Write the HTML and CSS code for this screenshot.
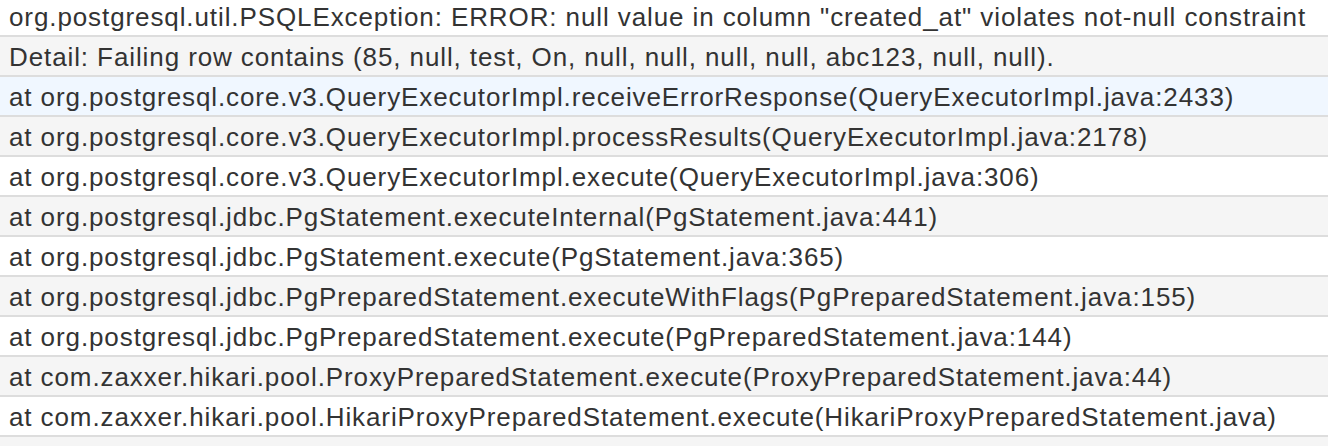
FILE: index.html
```html
<!DOCTYPE html>
<html>
<head>
<meta charset="utf-8">
<link rel="stylesheet" href="styles.css">
</head>
<body>
<div class="viewport">
<ul class="trace">
  <li class="row">org.postgresql.util.PSQLException: ERROR: null value in column "created_at" violates not-null constraint</li>
  <li class="row">Detail: Failing row contains (85, null, test, On, null, null, null, null, abc123, null, null).</li>
  <li class="row hover">at org.postgresql.core.v3.QueryExecutorImpl.receiveErrorResponse(QueryExecutorImpl.java:2433)</li>
  <li class="row">at org.postgresql.core.v3.QueryExecutorImpl.processResults(QueryExecutorImpl.java:2178)</li>
  <li class="row">at org.postgresql.core.v3.QueryExecutorImpl.execute(QueryExecutorImpl.java:306)</li>
  <li class="row">at org.postgresql.jdbc.PgStatement.executeInternal(PgStatement.java:441)</li>
  <li class="row">at org.postgresql.jdbc.PgStatement.execute(PgStatement.java:365)</li>
  <li class="row">at org.postgresql.jdbc.PgPreparedStatement.executeWithFlags(PgPreparedStatement.java:155)</li>
  <li class="row">at org.postgresql.jdbc.PgPreparedStatement.execute(PgPreparedStatement.java:144)</li>
  <li class="row">at com.zaxxer.hikari.pool.ProxyPreparedStatement.execute(ProxyPreparedStatement.java:44)</li>
  <li class="row">at com.zaxxer.hikari.pool.HikariProxyPreparedStatement.execute(HikariProxyPreparedStatement.java)</li>
  <li class="row">at org.springframework.jdbc.core.JdbcTemplate$SimplePreparedStatementCreator.executeAll(Unknown)</li>
</ul>
</div>
</body>
</html>
```
FILE: styles.css
```css
html, body {
  margin: 0;
  padding: 0;
  background: #ffffff;
}
.viewport {
  height: 446px;
  overflow: hidden;
}
.trace {
  list-style: none;
  margin: -3px 0 0 0;
  padding: 0;
  font-family: "Liberation Sans", Arial, sans-serif;
  font-size: 26px;
  letter-spacing: 0.9px;
  word-spacing: 0;
  color: #333333;
}
.row {
  height: 38px;
  line-height: 40px;
  padding: 0 9px;
  border-bottom: 2px solid #dddddd;
  white-space: nowrap;
  background: #ffffff;
}
.row:nth-child(even) {
  background: #f5f5f5;
}
.row.hover {
  background: #f0f7ff;
}
```
